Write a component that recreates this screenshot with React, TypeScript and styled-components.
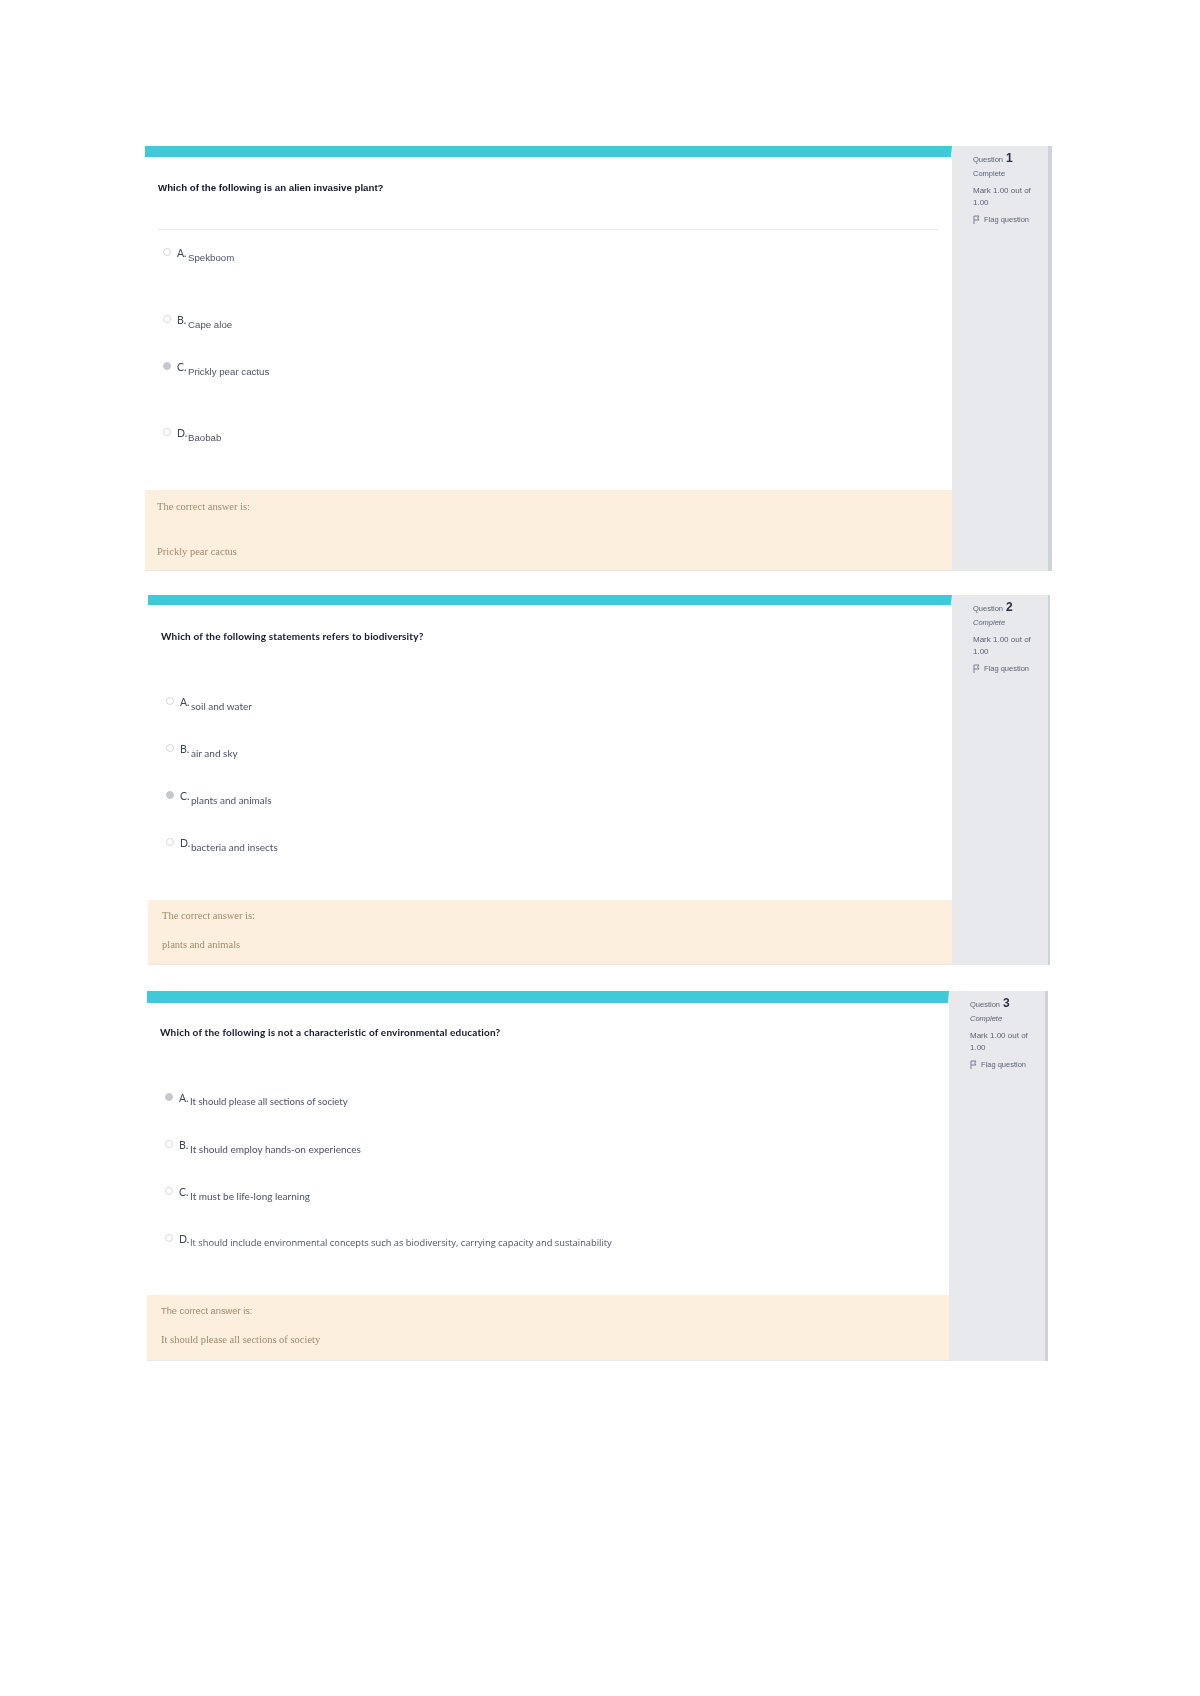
import React from "react";
import styled, { createGlobalStyle } from "styled-components";

const Global = createGlobalStyle`
  html, body { margin: 0; padding: 0; background: #fff; }
  body { font-family: "Lato", "Liberation Sans", sans-serif; }
`;

const Page = styled.div`
  width: 1200px;
  height: 1696px;
  padding-top: 146px;
  box-sizing: border-box;
  filter: blur(0.6px);
  overflow: hidden;
`;

const Card = styled.section<{ $left: number; $top: number; $height: number }>`
  display: flex;
  width: max-content;
  height: ${(p) => p.$height}px;
  margin-left: ${(p) => p.$left}px;
  margin-top: ${(p) => p.$top}px;
`;

const Main = styled.div<{ $width: number }>`
  display: flex;
  flex-direction: column;
  width: ${(p) => p.$width}px;
`;

const Bar = styled.div<{ $height: number }>`
  flex: none;
  height: ${(p) => p.$height}px;
  background: #3ecad9;
  clip-path: polygon(0 0, 100% 0, calc(100% - 1px) 100%, 0 100%);
`;

const Body = styled.div<{ $pad: number }>`
  flex: 1;
  padding-left: ${(p) => p.$pad}px;
  min-height: 0;
`;

const Question = styled.h3<{ $gap: number; $font: string; $size: number; $spacing: number }>`
  margin: ${(p) => p.$gap}px 0 0;
  font-family: ${(p) => p.$font};
  font-size: ${(p) => p.$size}px;
  letter-spacing: ${(p) => p.$spacing}px;
  line-height: 14px;
  font-weight: 700;
  color: #15152b;
  white-space: nowrap;
`;

const Divider = styled.hr`
  height: 1px;
  border: 0;
  background: #e8e8e8;
  margin: 34px 13px 0 0;
`;

const OptionList = styled.div<{ $gap: number; $inset: number }>`
  margin-top: ${(p) => p.$gap}px;
  padding-left: ${(p) => p.$inset}px;
`;

const Option = styled.div<{ $height: number }>`
  display: flex;
  align-items: flex-start;
  height: ${(p) => p.$height}px;
`;

const Radio = styled.span<{ $checked: boolean }>`
  flex: none;
  box-sizing: border-box;
  width: 8px;
  height: 8px;
  border-radius: 50%;
  border: 1px solid ${(p) => (p.$checked ? "#c6c7cc" : "#d6d8dc")};
  background: ${(p) => (p.$checked ? "#c6c8ce" : "#fff")};
`;

const Letter = styled.span`
  flex: none;
  width: 11px;
  margin-left: 6px;
  font-size: 10.5px;
  line-height: 10px;
  color: #3f4356;
`;

const Answer = styled.span<{ $font: string; $size: number; $top: number }>`
  margin-top: ${(p) => p.$top}px;
  font-family: ${(p) => p.$font};
  font-size: ${(p) => p.$size}px;
  line-height: 10px;
  color: #4c5165;
  white-space: nowrap;
`;

const Feedback = styled.div<{ $height: number; $pad: number; $gap: number; $inset: number }>`
  flex: none;
  box-sizing: border-box;
  display: flex;
  flex-direction: column;
  gap: ${(p) => p.$gap}px;
  height: ${(p) => p.$height}px;
  padding: ${(p) => p.$pad}px 0 0 ${(p) => p.$inset}px;
  background: #fcefdd;
  border-bottom: 1px solid #e9e8e6;
`;

const FeedbackLine = styled.p<{ $sans?: boolean }>`
  margin: 0;
  font-family: ${(p) => (p.$sans ? '"Liberation Sans", sans-serif' : '"Liberation Serif", serif')};
  font-size: ${(p) => (p.$sans ? 9.3 : 10.5)}px;
  line-height: 14px;
  color: #a08a6c;
  white-space: nowrap;
`;

const Aside = styled.aside<{ $pad: number; $strip: number }>`
  box-sizing: border-box;
  width: ${(p) => 96 + p.$strip}px;
  padding: ${(p) => p.$pad}px 6px 0 21px;
  background: #e7e9ed;
  border-right: ${(p) => p.$strip}px solid #ced2da;
  font-family: "Liberation Sans", sans-serif;
  color: #5c6274;
`;

const Title = styled.div`
  font-size: 7.5px;
  line-height: 14px;
  height: 14px;
  white-space: nowrap;
`;

const QNumber = styled.strong`
  font-size: 12px;
  color: #2c3040;
  margin-left: 3px;
  font-weight: 700;
`;

const State = styled.div<{ $italic: boolean }>`
  margin-top: 3px;
  font-size: 7.5px;
  line-height: 12px;
  font-style: ${(p) => (p.$italic ? "italic" : "normal")};
`;

const Mark = styled.div`
  margin-top: 5px;
  font-size: 8px;
  line-height: 12px;
`;

const Flag = styled.div`
  display: flex;
  align-items: center;
  gap: 4px;
  margin-top: 5px;
  font-size: 7.5px;
  line-height: 12px;
  white-space: nowrap;
`;

const FlagIcon = () => (
  <svg width="7" height="10" viewBox="0 0 7 10" fill="none" stroke="#7b8090" strokeWidth="1">
    <path d="M1 1h5L4.6 3 6 5H1M1 1v8" />
  </svg>
);

const LATO = '"Lato", sans-serif';
const ARIAL = '"Liberation Sans", sans-serif';
const OPEN = '"Open Sans", sans-serif';

type Opt = { letter: string; text: string; height: number; size?: number; font?: string };

const Q: {
  left: number; top: number; height: number; mainW: number; strip: number; barH: number; pad: number;
  qGap: number; qFont: string; qSize: number; qSpacing: number; text: string; divider: boolean;
  listGap: number; inset: number; aFont: string; aSize: number; aTop: number; opts: Opt[]; checked: number;
  fbH: number; fbPad: number; fbGap: number; fbInset: number; fbSans: boolean; answer: string;
  italic: boolean; num: number;
}[] = [
  {
    left: 145, top: 0, height: 425, mainW: 807, strip: 4, barH: 11, pad: 13,
    qGap: 24, qFont: ARIAL, qSize: 9.7, qSpacing: 0,
    text: "Which of the following is an alien invasive plant?",
    divider: true, listGap: 18, inset: 5, aFont: ARIAL, aSize: 9.7, aTop: 5,
    opts: [
      { letter: "A.", text: "Spekboom", height: 67 },
      { letter: "B.", text: "Cape aloe", height: 47 },
      { letter: "C.", text: "Prickly pear cactus", height: 66 },
      { letter: "D.", text: "Baobab", height: 30 },
    ],
    checked: 2, fbH: 81, fbPad: 10, fbGap: 31, fbInset: 12, fbSans: false, answer: "Prickly pear cactus",
    italic: false, num: 1,
  },
  {
    left: 148, top: 24, height: 370, mainW: 804, strip: 2, barH: 10, pad: 13,
    qGap: 24, qFont: LATO, qSize: 10, qSpacing: 0.17,
    text: "Which of the following statements refers to biodiversity?",
    divider: false, listGap: 54, inset: 5, aFont: LATO, aSize: 10, aTop: 4,
    opts: [
      { letter: "A.", text: "soil and water", height: 47 },
      { letter: "B.", text: "air and sky", height: 47 },
      { letter: "C.", text: "plants and animals", height: 47 },
      { letter: "D.", text: "bacteria and insects", height: 30 },
    ],
    checked: 2, fbH: 65, fbPad: 9, fbGap: 15, fbInset: 14, fbSans: false, answer: "plants and animals",
    italic: true, num: 2,
  },
  {
    left: 147, top: 26, height: 370, mainW: 802, strip: 3, barH: 12, pad: 13,
    qGap: 22, qFont: LATO, qSize: 10, qSpacing: 0.18,
    text: "Which of the following is not a characteristic of environmental education?",
    divider: false, listGap: 54, inset: 5, aFont: LATO, aSize: 10, aTop: 4,
    opts: [
      { letter: "A.", text: "It should please all sections of society", height: 47, size: 9.6 },
      { letter: "B.", text: "It should employ hands-on experiences", height: 47 },
      { letter: "C.", text: "It must be life-long learning", height: 47 },
      { letter: "D.", text: "It should include environmental concepts such as biodiversity, carrying capacity and sustainability", height: 30, font: OPEN, size: 9.3 },
    ],
    checked: 0, fbH: 66, fbPad: 9, fbGap: 15, fbInset: 14, fbSans: true, answer: "It should please all sections of society",
    italic: true, num: 3,
  },
];

export default function App() {
  return (
    <>
      <Global />
      <Page>
        {Q.map((q) => (
          <Card key={q.num} $left={q.left} $top={q.top} $height={q.height}>
            <Main $width={q.mainW}>
              <Bar $height={q.barH} />
              <Body $pad={q.pad}>
                <Question $gap={q.qGap} $font={q.qFont} $size={q.qSize} $spacing={q.qSpacing}>{q.text}</Question>
                {q.divider && <Divider />}
                <OptionList $gap={q.listGap} $inset={q.inset}>
                  {q.opts.map((o, i) => (
                    <Option key={i} $height={o.height}>
                      <Radio $checked={i === q.checked} />
                      <Letter>{o.letter}</Letter>
                      <Answer $font={o.font ?? q.aFont} $size={o.size ?? q.aSize} $top={q.aTop}>{o.text}</Answer>
                    </Option>
                  ))}
                </OptionList>
              </Body>
              <Feedback $height={q.fbH} $pad={q.fbPad} $gap={q.fbGap} $inset={q.fbInset}>
                <FeedbackLine $sans={q.fbSans}>The correct answer is:</FeedbackLine>
                <FeedbackLine>{q.answer}</FeedbackLine>
              </Feedback>
            </Main>
            <Aside $pad={5} $strip={q.strip}>
              <Title>Question<QNumber>{q.num}</QNumber></Title>
              <State $italic={q.italic}>Complete</State>
              <Mark>Mark 1.00 out of<br />1.00</Mark>
              <Flag><FlagIcon />Flag question</Flag>
            </Aside>
          </Card>
        ))}
      </Page>
    </>
  );
}
